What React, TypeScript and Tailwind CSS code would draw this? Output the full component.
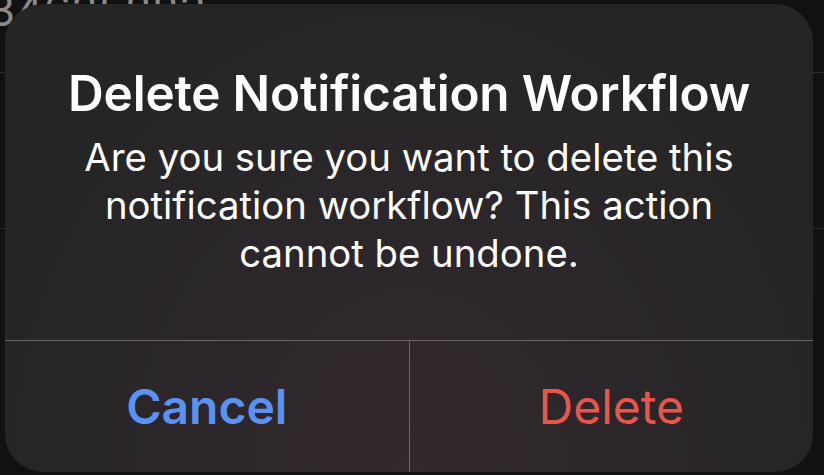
import React from "react";

export default function App() {
  return (
    <div
      className="relative w-[824px] h-[475px] overflow-hidden bg-[#111111]"
      style={{ fontFamily: "Inter, 'Noto Sans', sans-serif" }}
    >
      {/* backdrop content */}
      <div className="flex flex-col">
        <div className="h-[73px] border-b border-[#2e2e2e] overflow-hidden">
          <span className="block -mt-[16px] -ml-[12px] text-[44px] leading-[52px] text-[#8a8a8a]">34625883</span>
        </div>
        <div className="h-[156px] border-b border-[#2e2e2e]" />
      </div>

      {/* alert */}
      <div className="absolute left-[5px] top-[4px] w-[808px] h-[468px] rounded-[38px] overflow-hidden flex flex-col bg-[radial-gradient(ellipse_at_50%_100%,#33292f_0%,#2a2629_45%,#252525_80%)]">
        <div className="h-[336px] flex flex-col items-center text-center pt-[61px]">
          <div className="text-[49.5px] leading-[56px] font-semibold text-white tracking-[-0.2px]">
            Delete Notification Workflow
          </div>
          <div className="mt-[12px] text-[38.3px] leading-[48px] text-white">
            Are you sure you want to delete this
            <br />
            notification workflow? This action
            <br />
            cannot be undone.
          </div>
        </div>
        <div className="flex-1 flex border-t border-[#6a6668]">
          <div className="flex-1 flex items-center justify-center text-[48px] font-semibold text-[#5b92f2]">
            Cancel
          </div>
          <div className="w-px bg-[#6e646a]" />
          <div className="flex-1 flex items-center justify-center text-[48px] text-[#e8554b]">
            Delete
          </div>
        </div>
      </div>
    </div>
  );
}
